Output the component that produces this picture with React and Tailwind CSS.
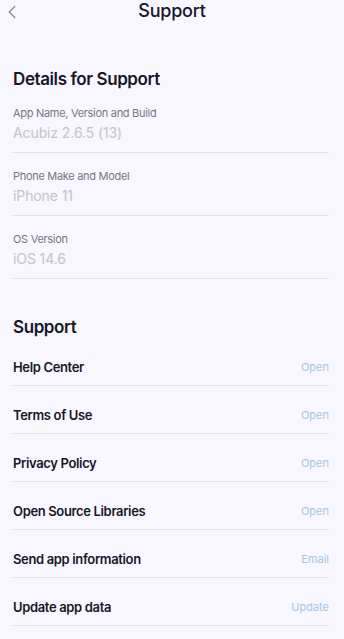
import { ChevronLeft } from 'lucide-react';

const details = [
  { label: 'App Name, Version and Build', value: 'Acubiz 2.6.5 (13)' },
  { label: 'Phone Make and Model', value: 'iPhone 11' },
  { label: 'OS Version', value: 'iOS 14.6' },
];

const links = [
  { title: 'Help Center', action: 'Open' },
  { title: 'Terms of Use', action: 'Open' },
  { title: 'Privacy Policy', action: 'Open' },
  { title: 'Open Source Libraries', action: 'Open' },
  { title: 'Send app information', action: 'Email' },
  { title: 'Update app data', action: 'Update' },
];

export default function App() {
  return (
    <div
      className="min-h-screen bg-[#f8f6fe] text-[#171729]"
      style={{ fontFamily: 'Inter, "Noto Sans", sans-serif' }}
    >
      <div className="relative h-[22px] flex items-center justify-center">
        <ChevronLeft className="absolute left-[1px] top-[1px] w-[22px] h-[22px] text-[#8c8c9c]" strokeWidth={1.4} />
        <h1 className="text-[18px] leading-[22px] font-medium tracking-[-0.2px]">Support</h1>
      </div>

      <div className="pl-[13px] pr-[15px]">
        <h2 className="mt-[45px] text-[17px] leading-[24px] font-semibold tracking-[-0.4px]">Details for Support</h2>

        <div className="mt-[15px]">
          {details.map((d, i) => (
            <div key={d.label} className={`border-b border-[#e2e0ea] pb-[10px] ${i > 0 ? 'pt-[16px]' : ''}`}>
              <div className="text-[11px] leading-[14px] text-[#77778a] tracking-[-0.3px]">{d.label}</div>
              <div className="mt-[4px] text-[14px] leading-[18px] text-[#c3c3cc] tracking-[-0.1px]">{d.value}</div>
            </div>
          ))}
        </div>

        <h2 className="mt-[36px] text-[17px] leading-[24px] font-semibold tracking-[-0.4px]">Support</h2>

        <div>
          {links.map((l, i) => (
            <div
              key={l.title}
              className={`flex items-center justify-between border-b border-[#e2e0ea] pb-[9px] ${i === 0 ? 'pt-[19px]' : 'pt-[20px]'}`}
            >
              <span className="text-[13px] leading-[18px] font-semibold tracking-[-0.35px]">{l.title}</span>
              <span className="text-[11px] leading-[18px] text-[#a3c6e5]">{l.action}</span>
            </div>
          ))}
        </div>
      </div>
    </div>
  );
}
